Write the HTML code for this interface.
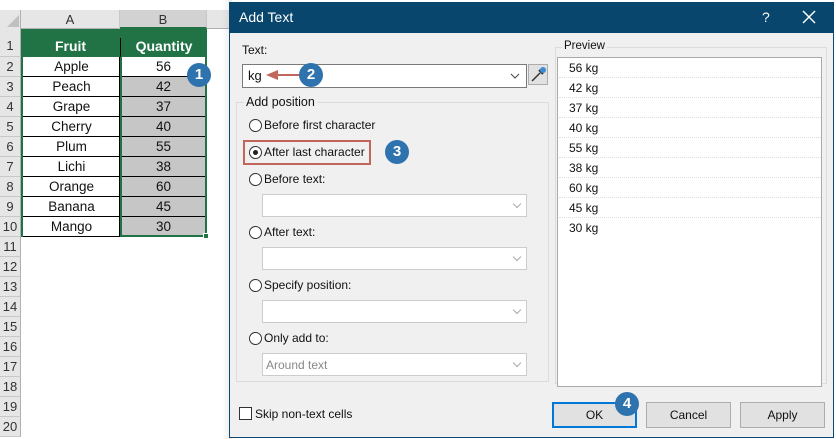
<!DOCTYPE html>
<html><head><meta charset="utf-8"><style>
*{box-sizing:border-box;margin:0;padding:0}
body{width:836px;height:439px;overflow:hidden;background:#fff;font-family:"Liberation Sans",sans-serif;position:relative}
.a{position:absolute}
.rh{position:absolute;left:0;width:21px;height:20px;background:#e6e6e6;border-bottom:1px solid #c8c8c8;border-right:1px solid #b0b0b0;font-size:13px;color:#333;text-align:center;line-height:20px}
.c{position:absolute;height:20px;font-size:13.5px;text-align:center;line-height:20px;color:#111;border-bottom:1px solid #000}
.badge{position:absolute;width:24px;height:24px;border-radius:50%;background:#2f73ae;color:#fff;font-weight:bold;font-size:15px;text-align:center;line-height:24px}
.t{position:absolute;font-size:12px;color:#111;white-space:nowrap}
.radio{position:absolute;width:13px;height:13px;border:1px solid #333;border-radius:50%;background:#fff}
.combo{position:absolute;left:262px;width:265px;height:23px;background:#fff;border:1px solid #ccc}
.combo:after{content:"";position:absolute;right:6px;top:6px;width:5px;height:5px;border-right:1px solid #aaa;border-bottom:1px solid #aaa;transform:rotate(45deg)}
.btn{position:absolute;top:402px;width:85px;height:26px;background:#e1e1e1;border:1px solid #adadad;font-size:12px;text-align:center;line-height:24px;color:#111}
.pr{position:absolute;left:559px;width:262px;height:20px;border-bottom:1px dotted #ddd;font-size:12px;line-height:20px;padding-left:10px;color:#111}
</style></head><body>
<!-- spreadsheet -->
<div class="a" style="left:0;top:10px;width:230px;height:19px;background:#e6e6e6;border-bottom:1px solid #b0b0b0"></div>
<div class="a" style="left:0;top:10px;width:21px;height:19px;background:#e6e6e6;border-right:1px solid #b0b0b0"></div>
<div class="a" style="left:7px;top:15px;width:0;height:0;border-left:12px solid transparent;border-bottom:12px solid #c0c0c0"></div>
<div class="a" style="left:21px;top:10px;width:99px;height:19px;border-right:1px solid #c8c8c8;text-align:center;font-size:13px;line-height:19px;color:#333">A</div>
<div class="a" style="left:120px;top:10px;width:87px;height:19px;background:#d2d2d2;border-right:1px solid #c8c8c8;border-bottom:2px solid #217346;text-align:center;font-size:13px;line-height:19px;color:#333">B</div>
<div class="rh" style="top:29px;height:28px;line-height:34px">1</div>
<div class="rh" style="top:57px">2</div><div class="rh" style="top:77px">3</div><div class="rh" style="top:97px">4</div><div class="rh" style="top:117px">5</div><div class="rh" style="top:137px">6</div><div class="rh" style="top:157px">7</div><div class="rh" style="top:177px">8</div><div class="rh" style="top:197px">9</div><div class="rh" style="top:217px">10</div><div class="rh" style="top:237px">11</div><div class="rh" style="top:257px">12</div><div class="rh" style="top:277px">13</div><div class="rh" style="top:297px">14</div><div class="rh" style="top:317px">15</div><div class="rh" style="top:337px">16</div><div class="rh" style="top:357px">17</div><div class="rh" style="top:377px">18</div><div class="rh" style="top:397px">19</div><div class="rh" style="top:417px">20</div>
<div class="a" style="left:21px;top:29px;width:186px;height:28px;background:#217346;color:#fff;font-weight:bold;font-size:14px"><span class="a" style="left:0;width:99px;text-align:center;top:9px">Fruit</span><span class="a" style="left:99px;width:87px;text-align:center;top:9px;border-left:1px solid #000;height:19px">Quantity</span></div>
<div class="a" style="left:21px;top:57px;width:2px;height:180px;background:#217346"></div>
<div class="a" style="left:120px;top:57px;width:87px;height:180px;background:#c6c6c6;border:2px solid #217346"></div>
<div class="a" style="left:122px;top:57px;width:83px;height:20px;background:#fff"></div>
<div class="a" style="left:203px;top:233px;width:6px;height:6px;background:#217346;border:1px solid #fff"></div>
<div class="c" style="left:23px;top:57px;width:97px">Apple</div><div class="c" style="left:122px;top:57px;width:83px">56</div>
<div class="c" style="left:23px;top:77px;width:97px">Peach</div><div class="c" style="left:122px;top:77px;width:83px">42</div>
<div class="c" style="left:23px;top:97px;width:97px">Grape</div><div class="c" style="left:122px;top:97px;width:83px">37</div>
<div class="c" style="left:23px;top:117px;width:97px">Cherry</div><div class="c" style="left:122px;top:117px;width:83px">40</div>
<div class="c" style="left:23px;top:137px;width:97px">Plum</div><div class="c" style="left:122px;top:137px;width:83px">55</div>
<div class="c" style="left:23px;top:157px;width:97px">Lichi</div><div class="c" style="left:122px;top:157px;width:83px">38</div>
<div class="c" style="left:23px;top:177px;width:97px">Orange</div><div class="c" style="left:122px;top:177px;width:83px">60</div>
<div class="c" style="left:23px;top:197px;width:97px">Banana</div><div class="c" style="left:122px;top:197px;width:83px">45</div>
<div class="c" style="left:23px;top:217px;width:97px">Mango</div><div class="c" style="left:122px;top:217px;width:83px;border:none">30</div>
<div class="a" style="left:119px;top:57px;width:1px;height:180px;background:#000"></div>
<div class="badge" style="left:187px;top:63px">1</div>
<!-- dialog -->
<div class="a" style="left:222px;top:0;width:10px;height:439px;background:linear-gradient(90deg,rgba(0,0,0,0),rgba(0,0,0,.08))"></div>
<div class="a" style="left:229px;top:2px;width:605px;height:436px;background:#f0f0f0;border:1px solid #0a4a72"></div>
<div class="a" style="left:229px;top:2px;width:605px;height:31px;background:#08466e"></div>
<div class="t" style="left:239px;top:9px;color:#fff;font-size:14px">Add Text</div>
<div class="t" style="left:762px;top:9px;color:#fff;font-size:14px">?</div>
<svg class="a" style="left:802px;top:10px" width="14" height="14"><path d="M1 1L13 13M13 1L1 13" stroke="#fff" stroke-width="1.5"/></svg>
<div class="t" style="left:242px;top:43px">Text:</div>
<div class="a" style="left:242px;top:64px;width:285px;height:24px;background:#fff;border:1px solid #7a7a7a"></div>
<div class="t" style="left:248px;top:68px;font-size:13px">kg</div>
<svg class="a" style="left:510px;top:72px" width="10" height="8"><path d="M1 2L5 6L9 2" stroke="#444" fill="none"/></svg>
<svg class="a" style="left:266px;top:69px" width="46" height="12"><path d="M44 6H10" stroke="#c0665a" stroke-width="2"/><path d="M0 6L12 1V11Z" fill="#c0665a"/></svg>
<div class="badge" style="left:299px;top:63px">2</div>
<div class="a" style="left:528px;top:64px;width:20px;height:21px;background:#e1e1e1;border:1px solid #adadad"></div>
<svg class="a" style="left:530px;top:66px" width="17" height="17"><path d="M2 15L10 7" stroke="#333" stroke-width="1.5"/><path d="M9 4L13 8" stroke="#333" stroke-width="2"/><circle cx="13" cy="4" r="3" fill="#3a8ad8"/></svg>
<div class="a" style="left:236px;top:102px;width:313px;height:280px;border:1px solid #dcdcdc"></div>
<div class="t" style="left:244px;top:95px;background:#f0f0f0;padding:0 2px;font-size:12.5px">Add position</div>
<div class="radio" style="left:249px;top:119px"></div><div class="t" style="left:264px;top:118px">Before first character</div>
<div class="a" style="left:243px;top:140px;width:128px;height:25px;border:2px solid #c0665a"></div>
<div class="radio" style="left:249px;top:146px"></div><div class="a" style="left:253px;top:150px;width:5px;height:5px;border-radius:50%;background:#222"></div><div class="t" style="left:264px;top:145px">After last character</div>
<div class="badge" style="left:385px;top:140px">3</div>
<div class="radio" style="left:249px;top:173px"></div><div class="t" style="left:264px;top:172px">Before text:</div>
<div class="combo" style="top:194px"></div>
<div class="radio" style="left:249px;top:226px"></div><div class="t" style="left:264px;top:225px">After text:</div>
<div class="combo" style="top:247px"></div>
<div class="radio" style="left:249px;top:279px"></div><div class="t" style="left:264px;top:278px">Specify position:</div>
<div class="combo" style="top:300px"></div>
<div class="radio" style="left:249px;top:332px"></div><div class="t" style="left:264px;top:331px">Only add to:</div>
<div class="combo" style="top:353px"></div><div class="t" style="left:266px;top:358px;color:#888">Around text</div>
<div class="a" style="left:555px;top:47px;width:272px;height:337px;border:1px solid #dcdcdc"></div>
<div class="t" style="left:562px;top:40px;background:#f0f0f0;padding:0 2px;font-size:11.5px">Preview</div>
<div class="a" style="left:557px;top:57px;width:265px;height:330px;background:#fff;border:1px solid #aaa"></div>
<div class="pr" style="top:58px">56 kg</div><div class="pr" style="top:78px">42 kg</div><div class="pr" style="top:98px">37 kg</div><div class="pr" style="top:118px">40 kg</div><div class="pr" style="top:138px">55 kg</div><div class="pr" style="top:158px">38 kg</div><div class="pr" style="top:178px">60 kg</div><div class="pr" style="top:198px">45 kg</div><div class="pr" style="top:218px;border:none">30 kg</div>
<div class="a" style="left:239px;top:407px;width:13px;height:13px;background:#fff;border:1px solid #333"></div>
<div class="t" style="left:255px;top:407px">Skip non-text cells</div>
<div class="btn" style="left:552px;border:2px solid #0078d7;line-height:22px">OK</div>
<div class="btn" style="left:646px">Cancel</div>
<div class="btn" style="left:740px">Apply</div>
<div class="badge" style="left:615px;top:392px">4</div>
</body></html>
